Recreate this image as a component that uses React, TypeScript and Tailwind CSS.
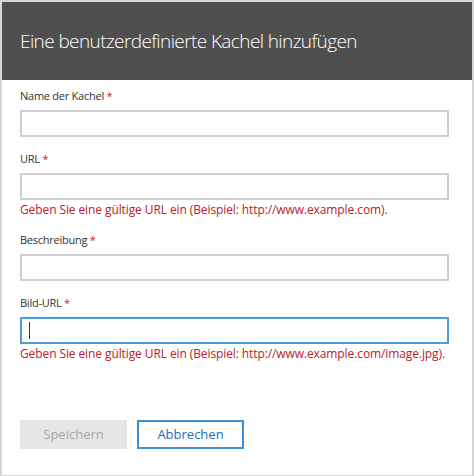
const font = { fontFamily: '"Open Sans", "Noto Sans", sans-serif' }

function Label({ text }: { text: string }) {
  return (
    <div className="h-4 text-[11px] leading-4 tracking-[-0.25px] text-[#333]">
      {text} <span className="text-[#c4262e]">*</span>
    </div>
  )
}

function Field({ focused = false }: { focused?: boolean }) {
  return (
    <div
      className={
        focused
          ? 'mt-[6px] flex h-[27px] w-[429px] items-center border-2 border-[#4a9ee0] bg-white pl-[7px]'
          : 'mt-[6px] h-[27px] w-[429px] border-2 border-[#cfcfcf] bg-white'
      }
    >
      {focused && <div className="h-[17px] w-px bg-[#333]" />}
    </div>
  )
}

function ErrorText({ text }: { text: string }) {
  return (
    <div className="mt-[2px] h-4 whitespace-nowrap text-[12px] leading-4 tracking-[-0.1px] text-[#b8202a]">
      {text}
    </div>
  )
}

export default function App() {
  return (
    <div
      className="h-[476px] w-[474px] overflow-hidden border-x-2 border-t-2 border-b border-[#d6d6d6] bg-white"
      style={font}
    >
      <header className="flex h-[78px] items-center bg-[#4f4f4f] px-[18px] text-[19px] font-light tracking-[-0.6px] text-white">
        Eine benutzerdefinierte Kachel hinzufügen
      </header>

      <section className="px-[18px] pt-2">
        <Label text="Name der Kachel" />
        <Field />

        <div className="mt-[14px]">
          <Label text="URL" />
          <Field />
          <ErrorText text="Geben Sie eine gültige URL ein (Beispiel: http://www.example.com)." />
        </div>

        <div className="mt-[14px]">
          <Label text="Beschreibung" />
          <Field />
        </div>

        <div className="mt-[14px]">
          <Label text="Bild-URL" />
          <Field focused />
          <ErrorText text="Geben Sie eine gültige URL ein (Beispiel: http://www.example.com/image.jpg)." />
        </div>

        <div className="mt-[58px] flex gap-[10px]">
          <button className="h-[29px] w-[107px] bg-[#e6e6e6] text-[13px] text-[#a6a6a6]">
            Speichern
          </button>
          <button className="h-[29px] w-[107px] border-2 border-[#3b8fd9] bg-white text-[13px] text-[#1a6fc0]">
            Abbrechen
          </button>
        </div>
      </section>
    </div>
  )
}
